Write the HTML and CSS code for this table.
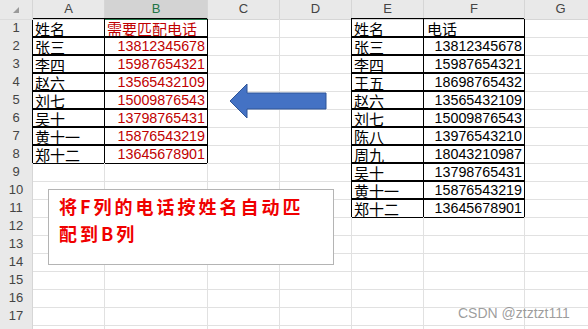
FILE: index.html
```html
<!DOCTYPE html>
<html lang="zh">
<head>
<meta charset="utf-8">
<title>Sheet</title>
<link rel="stylesheet" href="styles.css">
</head>
<body>
<div class="sheet">
  <div class="row head">
    <div class="h corner"><span class="tri"></span></div>
    <div class="ch">A</div><div class="ch sel">B</div><div class="ch">C</div><div class="ch">D</div><div class="ch">E</div><div class="ch">F</div><div class="ch">G</div>
  </div>
  <div class="row">
    <div class="h">1</div>
    <div class="c t">姓名</div><div class="c t red">需要匹配电话</div><div class="c"></div><div class="c"></div>
    <div class="c t">姓名</div><div class="c t pl">电话</div><div class="c"></div>
  </div>
  <div class="row">
    <div class="h">2</div>
    <div class="c t">张三</div><div class="c t n red">13812345678</div><div class="c"></div><div class="c"></div>
    <div class="c t">张三</div><div class="c t n">13812345678</div><div class="c"></div>
  </div>
  <div class="row">
    <div class="h">3</div>
    <div class="c t">李四</div><div class="c t n red">15987654321</div><div class="c"></div><div class="c"></div>
    <div class="c t">李四</div><div class="c t n">15987654321</div><div class="c"></div>
  </div>
  <div class="row">
    <div class="h">4</div>
    <div class="c t">赵六</div><div class="c t n red">13565432109</div><div class="c"></div><div class="c"></div>
    <div class="c t">王五</div><div class="c t n">18698765432</div><div class="c"></div>
  </div>
  <div class="row">
    <div class="h">5</div>
    <div class="c t">刘七</div><div class="c t n red">15009876543</div><div class="c"></div><div class="c"></div>
    <div class="c t">赵六</div><div class="c t n">13565432109</div><div class="c"></div>
  </div>
  <div class="row">
    <div class="h">6</div>
    <div class="c t">吴十</div><div class="c t n red">13798765431</div><div class="c"></div><div class="c"></div>
    <div class="c t">刘七</div><div class="c t n">15009876543</div><div class="c"></div>
  </div>
  <div class="row">
    <div class="h">7</div>
    <div class="c t">黄十一</div><div class="c t n red">15876543219</div><div class="c"></div><div class="c"></div>
    <div class="c t">陈八</div><div class="c t n">13976543210</div><div class="c"></div>
  </div>
  <div class="row">
    <div class="h">8</div>
    <div class="c t">郑十二</div><div class="c t n red">13645678901</div><div class="c"></div><div class="c"></div>
    <div class="c t">周九</div><div class="c t n">18043210987</div><div class="c"></div>
  </div>
  <div class="row">
    <div class="h">9</div>
    <div class="c"></div><div class="c"></div><div class="c"></div><div class="c"></div>
    <div class="c t">吴十</div><div class="c t n">13798765431</div><div class="c"></div>
  </div>
  <div class="row">
    <div class="h">10</div>
    <div class="c"></div><div class="c"></div><div class="c"></div><div class="c"></div>
    <div class="c t">黄十一</div><div class="c t n">15876543219</div><div class="c"></div>
  </div>
  <div class="row">
    <div class="h">11</div>
    <div class="c"></div><div class="c"></div><div class="c"></div><div class="c"></div>
    <div class="c t">郑十二</div><div class="c t n">13645678901</div><div class="c"></div>
  </div>
  <div class="row">
    <div class="h">12</div>
    <div class="c"></div><div class="c"></div><div class="c"></div><div class="c"></div><div class="c"></div><div class="c"></div><div class="c"></div>
  </div>
  <div class="row">
    <div class="h">13</div>
    <div class="c"></div><div class="c"></div><div class="c"></div><div class="c"></div><div class="c"></div><div class="c"></div><div class="c"></div>
  </div>
  <div class="row">
    <div class="h">14</div>
    <div class="c"></div><div class="c"></div><div class="c"></div><div class="c"></div><div class="c"></div><div class="c"></div><div class="c"></div>
  </div>
  <div class="row">
    <div class="h">15</div>
    <div class="c"></div><div class="c"></div><div class="c"></div><div class="c"></div><div class="c"></div><div class="c"></div><div class="c"></div>
  </div>
  <div class="row">
    <div class="h">16</div>
    <div class="c"></div><div class="c"></div><div class="c"></div><div class="c"></div><div class="c"></div><div class="c"></div><div class="c"></div>
  </div>
  <div class="row">
    <div class="h">17</div>
    <div class="c"></div><div class="c"></div><div class="c"></div><div class="c"></div><div class="c"></div><div class="c"></div><div class="c"></div>
  </div>
  <div class="row">
    <div class="h">18</div>
    <div class="c"></div><div class="c"></div><div class="c"></div><div class="c"></div><div class="c"></div><div class="c"></div><div class="c"></div>
  </div>

  <svg class="arrow" width="100" height="38" viewBox="0 0 100 38">
    <polygon points="2,19 19,2 19,11 98,11 98,27 19,27 19,36" fill="#4472c4" stroke="#2f5597" stroke-width="1"/>
  </svg>

  <div class="note">将F列的电话按姓名自动匹<br>配到B列</div>

  <div class="mark">CSDN @ztztzt111</div>
</div>
</body>
</html>
```

FILE: styles.css
```css
html, body {
  margin: 0;
  padding: 0;
  background: #ffffff;
}

.sheet {
  position: relative;
  width: 588px;
  height: 329px;
  overflow: hidden;
  font-family: "Noto Sans CJK SC", sans-serif;
}

.row {
  display: grid;
  grid-template-columns: 33px 72px 103px 72px 72px 72px 101px 72px;
  height: 18px;
}

.row.head {
  height: 19px;
}

.row > div {
  box-sizing: border-box;
  border-right: 1px solid #e1e1e1;
  border-bottom: 1px solid #e1e1e1;
  white-space: nowrap;
}

.h, .ch {
  background: #e9e9e9;
  color: #444444;
  font-family: "Liberation Sans", Arial, sans-serif;
  font-size: 13px;
  text-align: center;
  line-height: 18px;
}

.row > .h {
  border-right-color: #d6d6d6;
  border-bottom-color: #dcdcdc;
}

.row > .ch {
  border-right-color: #d6d6d6;
  border-bottom-color: #d6d6d6;
}

.row > .ch.sel {
  background: #d3d3d3;
  color: #217346;
  border-bottom: 2px solid #217346;
}

.corner {
  position: relative;
}

.tri {
  position: absolute;
  left: 13px;
  top: 7px;
  width: 0;
  height: 0;
  border-left: 6px solid transparent;
  border-bottom: 6px solid #9a9a9a;
}

.c {
  font-size: 15px;
  line-height: 17px;
  padding-top: 1px;
  color: #000000;
  padding-left: 2px;
}

.row > .c.t {
  border-right: 1px solid #000000;
  border-bottom: 1px solid #000000;
  box-shadow: -1px -1px 0 #000000;
}

.c.pl {
  padding-left: 3px;
}

.c.n {
  font-family: "Liberation Sans", Arial, sans-serif;
  font-size: 14.3px;
  text-align: right;
  padding-left: 0;
  padding-right: 2px;
  padding-top: 2px;
  line-height: 15px;
}

.c.red {
  color: #c00000;
}

.arrow {
  position: absolute;
  left: 228px;
  top: 82px;
}

.note {
  position: absolute;
  left: 48px;
  top: 189px;
  width: 286px;
  height: 76px;
  box-sizing: border-box;
  border: 1px solid #b4b4b4;
  background: #ffffff;
  padding: 3px 0 0 10px;
  color: #f00000;
  font-family: "Noto Sans CJK SC", sans-serif;
  font-weight: bold;
  font-size: 18px;
  line-height: 27px;
  letter-spacing: 3px;
  white-space: nowrap;
}

.mark {
  position: absolute;
  left: 458px;
  top: 305px;
  color: rgba(140, 140, 140, 0.85);
  font-family: "Liberation Sans", Arial, sans-serif;
  font-size: 14px;
  line-height: 16px;
}
```
